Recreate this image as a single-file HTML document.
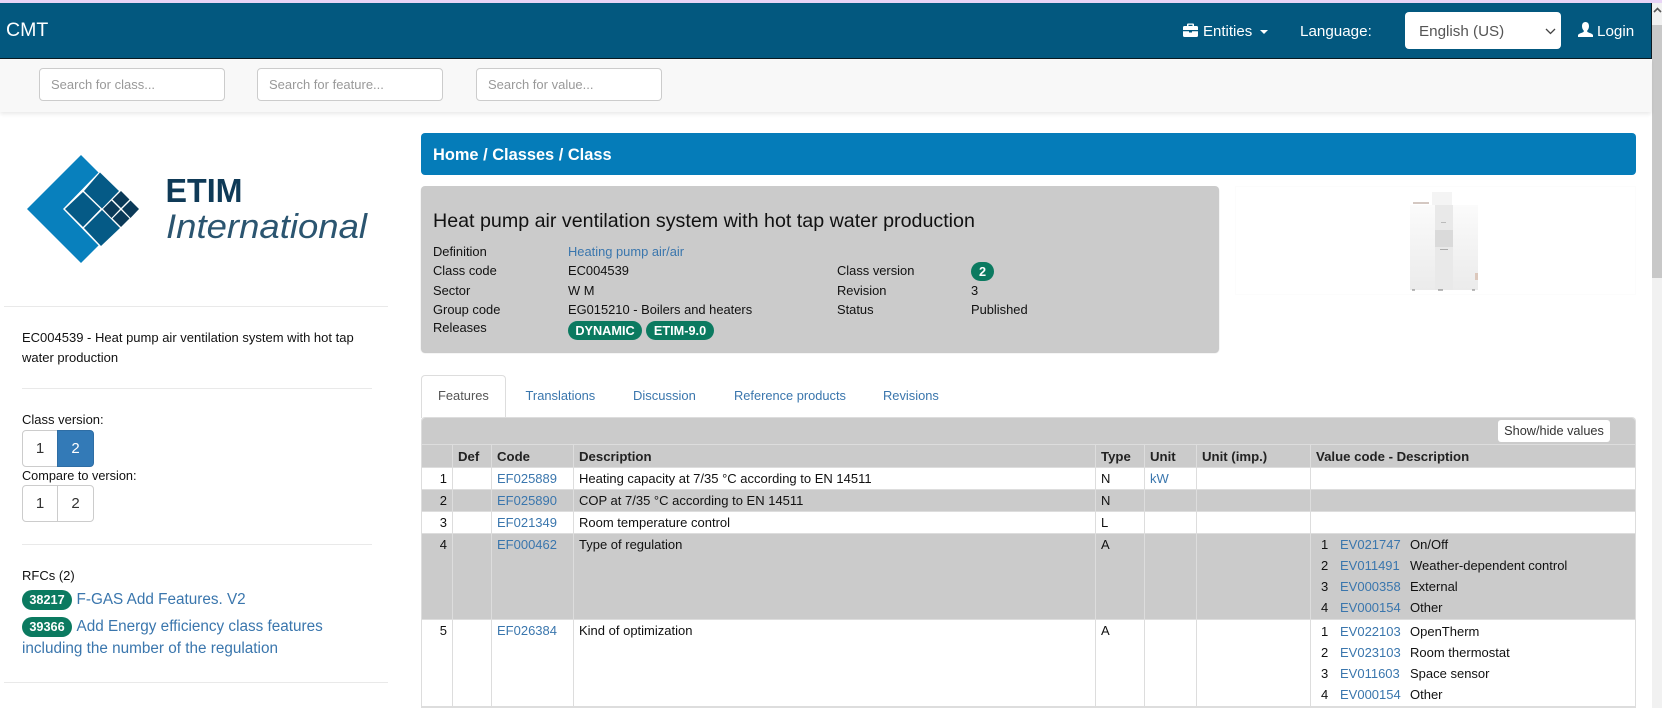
<!DOCTYPE html>
<html><head><meta charset="utf-8"><style>
html,body{margin:0;padding:0;width:1662px;height:708px;overflow:hidden;background:#fff;font-family:"Liberation Sans",Arial,sans-serif;color:#111}
.a{position:absolute;white-space:nowrap;line-height:20px}
a{color:#3a76ad;text-decoration:none}
.s{font-size:13px}
.t{font-size:12.900px}
.hr{position:absolute;height:1px;background:#e9e9e9}
.inp{position:absolute;top:68px;width:183.500px;height:31px;border:1px solid #ccc;border-radius:4px;background:#fff;color:#999;font-size:13px;line-height:31px;text-indent:11px}
.btn{position:absolute;width:36px;height:37px;box-sizing:border-box;border:1px solid #ccc;background:#fff;text-align:center;font-size:15px;line-height:35px;color:#333}
.bdg{position:absolute;background:#0b7a60;color:#fff;font-weight:bold;font-size:12.720px;text-align:center;border-radius:10px}
table{position:absolute;left:422px;top:445px;width:1213px;border-collapse:separate;border-spacing:0;table-layout:fixed;font-size:13px;line-height:20px}
td,th{box-sizing:border-box;border-right:1px solid #ddd;border-bottom:1px solid #ddd;padding:1px 0 0 5px;vertical-align:top;text-align:left;overflow:hidden;white-space:nowrap}
th{font-weight:bold;color:#222;font-size:13.200px;padding-top:2px}
td:last-child,th:last-child{border-right:0}
.g td,.g th{background:#cbcbcb}
.w td{background:#fff}
td.n,th.n{text-align:right;padding-right:5px;padding-left:0}
.v{position:relative;height:20.900px;line-height:20.900px}
.v b{font-weight:normal;position:absolute;left:5px}
.v a{position:absolute;left:24px}
.v i{font-style:normal;position:absolute;left:94px}
</style></head><body>
<div style="position:absolute;left:0;top:0;width:1662px;height:3px;background:#e8d4f6"></div>
<div style="position:absolute;left:0;top:3px;width:1651px;height:55px;background:#03587f;border-right:1px solid #0a1a22;border-bottom:1px solid #0a1a22"></div>
<div class="a" style="left:6px;top:20px;color:#fff;font-size:19.500px">CMT</div>
<svg style="position:absolute;left:1183px;top:23px" width="15" height="14" viewBox="0 0 15 14"><path fill="#fff" d="M5 0.5h5a1 1 0 0 1 1 1V3h2.500A1.500 1.500 0 0 1 15 4.500V7H0V4.500A1.500 1.500 0 0 1 1.500 3H4V1.500a1 1 0 0 1 1-1zM5.500 1.800V3h4V1.800zM0 8.300h6v1.200h3V8.300h6v4.200A1.500 1.500 0 0 1 13.500 14h-12A1.500 1.500 0 0 1 0 12.500z"/></svg>
<div class="a" style="left:1203px;top:22px;color:#fff;font-size:15px">Entities</div>
<div style="position:absolute;left:1260px;top:30px;width:0;height:0;border-left:4px solid transparent;border-right:4px solid transparent;border-top:4px solid #fff"></div>
<div class="a" style="left:1300px;top:22px;color:#fff;font-size:15.200px">Language:</div>
<div style="position:absolute;left:1405px;top:12px;width:156px;height:37px;background:#fff;border-radius:4px"></div>
<div class="a" style="left:1419px;top:22px;color:#555;font-size:15.200px">English (US)</div>
<svg style="position:absolute;left:1545px;top:28px" width="11" height="7" viewBox="0 0 11 7"><path d="M1 1l4.500 4.500L10 1" fill="none" stroke="#444" stroke-width="1.300"/></svg>
<svg style="position:absolute;left:1578px;top:22px" width="15" height="15" viewBox="0 0 15 15"><path fill="#fff" d="M7.500 0C10 0 11 2 11 4.200c0 1.800-.8 3.300-1.700 4.300-.3.800-.1 1.300.6 1.700 2 .8 4.300 1.300 5.100 2.800V15H0v-2c.8-1.500 3.100-2 5.100-2.800.7-.4.900-.9.600-1.700C4.800 7.500 4 6 4 4.200 4 2 5 0 7.500 0z"/></svg>
<div class="a" style="left:1597px;top:22px;color:#fff;font-size:15.200px">Login</div>

<div style="position:absolute;left:1652px;top:3px;width:10px;height:705px;background:#f1f1f1"></div>
<div style="position:absolute;left:1652px;top:25px;width:10px;height:253px;background:#c8c8c8"></div>
<svg style="position:absolute;left:1653px;top:7px" width="9" height="7" viewBox="0 0 9 7"><path d="M1 5l3.500-3.500L8 5" fill="none" stroke="#555" stroke-width="1.600"/></svg>

<div style="position:absolute;left:0;top:59px;width:1651px;height:53px;background:#f8f8f8;box-shadow:0 2px 4px rgba(0,0,0,.09)"></div>
<div class="inp" style="left:39px">Search for class...</div>
<div class="inp" style="left:257px">Search for feature...</div>
<div class="inp" style="left:476px">Search for value...</div>

<svg style="position:absolute;left:0;top:140px" width="400" height="135" viewBox="0 140 400 135">
<polygon fill="#0880bd" points="27,209 81,155 135,209 81,263"/>
<polygon fill="#fff" points="100,171 63,209 100,247 141,209"/>
<g fill="#055a86">
<polygon points="100,172.500 119,191 102,208.500 84,191"/>
<polygon points="83,192 100.500,209 83,227 65,209"/>
<polygon points="102,210 120,228 101,246 84,228"/>
</g>
<g fill="#0b3a58">
<polygon points="121,191 129.500,199.500 121,208 112.500,199.500"/>
<polygon points="111.500,200.500 120,209 111.500,218 103,209"/>
<polygon points="130.500,200.500 139,209 130.500,218 122,209"/>
<polygon points="121,210 129.500,218.500 121,227 112.500,218.500"/>
</g>
<text x="165.500" y="202" font-family="Liberation Sans" font-weight="bold" font-size="33" fill="#0f3a57" textLength="77" lengthAdjust="spacingAndGlyphs">ETIM</text>
<text x="166" y="238" font-family="Liberation Sans" font-style="italic" font-size="34" fill="#2b5570" textLength="201" lengthAdjust="spacingAndGlyphs">International</text>
</svg>

<div class="hr" style="left:4px;top:306px;width:384px"></div>
<div class="a s" style="left:22px;top:328px">EC004539 - Heat pump air ventilation system with hot tap</div>
<div class="a s" style="left:22px;top:348px">water production</div>
<div class="hr" style="left:22px;top:388px;width:350px"></div>
<div class="a s" style="left:22px;top:410px">Class version:</div>
<div class="btn" style="left:22px;top:430px;border-radius:4px 0 0 4px">1</div>
<div class="btn" style="left:57px;top:430px;width:37px;border-color:#2e6da4;background:#337ab7;color:#fff;border-radius:0 4px 4px 0">2</div>
<div class="a" style="left:22px;top:466px;font-size:12.720px">Compare to version:</div>
<div class="btn" style="left:22px;top:485px;border-radius:4px 0 0 4px">1</div>
<div class="btn" style="left:57px;top:485px;width:37px;border-radius:0 4px 4px 0">2</div>
<div class="hr" style="left:22px;top:544px;width:350px"></div>
<div class="a s" style="left:22px;top:566px">RFCs (2)</div>
<div class="bdg" style="left:22px;top:590px;width:50px;height:20px;line-height:20px">38217</div>
<a class="a" style="left:76.500px;top:590px;font-size:15.300px">F-GAS Add Features. V2</a>
<div class="bdg" style="left:22px;top:617px;width:50px;height:20px;line-height:20px">39366</div>
<a class="a" style="left:76.500px;top:617px;font-size:15.300px">Add Energy efficiency class features</a>
<a class="a" style="left:22px;top:639px;font-size:15.300px">including the number of the regulation</a>
<div class="hr" style="left:4px;top:682px;width:384px"></div>

<div style="position:absolute;left:421px;top:133px;width:1215px;height:42px;background:#057cb9;border-radius:4px"></div>
<div class="a" style="left:433px;top:144.500px;color:#fff;font-weight:bold;font-size:16.400px">Home / Classes / Class</div>

<div style="position:absolute;left:421px;top:186px;width:798px;height:166px;background:#cbcbcb;border-radius:4px;box-shadow:0 1px 1px rgba(0,0,0,.25)"></div>
<div class="a" style="left:433px;top:211px;font-size:19.660px">Heat pump air ventilation system with hot tap water production</div>
<div class="a t" style="left:433px;top:242px">Definition</div><a class="a t" style="left:568px;top:242px">Heating pump air/air</a>
<div class="a t" style="left:433px;top:261px">Class code</div><div class="a t" style="left:568px;top:261px">EC004539</div>
<div class="a t" style="left:837px;top:261px">Class version</div>
<div class="bdg" style="left:971px;top:262px;width:23px;height:19px;line-height:19px">2</div>
<div class="a t" style="left:433px;top:281px">Sector</div><div class="a t" style="left:568px;top:281px">W M</div>
<div class="a t" style="left:837px;top:281px">Revision</div><div class="a t" style="left:971px;top:281px">3</div>
<div class="a t" style="left:433px;top:300px">Group code</div><div class="a t" style="left:568px;top:300px">EG015210 - Boilers and heaters</div>
<div class="a t" style="left:837px;top:300px">Status</div><div class="a t" style="left:971px;top:300px">Published</div>
<div class="a t" style="left:433px;top:318px">Releases</div>
<div class="bdg" style="left:568px;top:321px;width:74px;height:19px;line-height:19px">DYNAMIC</div>
<div class="bdg" style="left:646px;top:321px;width:68px;height:19px;line-height:19px">ETIM-9.0</div>

<div style="position:absolute;left:1235px;top:186px;width:401px;height:109px;box-sizing:border-box;border:1px solid #fcfcfc"></div>
<svg style="position:absolute;left:1400px;top:185px" width="90" height="115" viewBox="0 0 90 115">
<defs><linearGradient id="g1" x1="0" y1="0" x2="0" y2="1"><stop offset="0" stop-color="#fbfbfb"/><stop offset="1" stop-color="#ebebeb"/></linearGradient></defs>
<rect x="10" y="20" width="68" height="85" fill="url(#g1)"/>
<rect x="32" y="7" width="20" height="13" fill="#f4f4f4"/>
<rect x="35" y="20" width="18" height="85" fill="#e9e9e9"/>
<rect x="35" y="45" width="18" height="17" fill="#dadada"/>
<rect x="40" y="64" width="8" height="1" fill="#aaa"/>
<rect x="41" y="37" width="5" height="1" fill="#bbb"/>
<rect x="13" y="17" width="16" height="2" fill="#d4c8c2"/>
<rect x="75" y="88" width="3" height="7" fill="#dcc8bc"/>
<rect x="12" y="104.500" width="3" height="1" fill="#777"/><rect x="38" y="104.500" width="5" height="1" fill="#777"/><rect x="72" y="104.500" width="3" height="1" fill="#777"/>
</svg>

<div style="position:absolute;left:421px;top:375px;width:85px;height:43px;box-sizing:border-box;border:1px solid #ddd;border-bottom:0;border-radius:4px 4px 0 0;background:#fff"></div>
<div class="a t" style="left:438px;top:386px;color:#555">Features</div>
<a class="a t" style="left:525.500px;top:386px">Translations</a>
<a class="a s" style="left:633px;top:386px">Discussion</a>
<a class="a" style="left:734px;top:386px;font-size:12.840px">Reference products</a>
<a class="a t" style="left:883px;top:386px">Revisions</a>

<div style="position:absolute;left:421px;top:417px;width:1215px;height:291px;background:#ddd;border-radius:4px 4px 0 0"></div>
<div style="position:absolute;left:422px;top:418px;width:1213px;height:27px;background:#cbcbcb;border-radius:4px 4px 0 0;border-bottom:1px solid #ddd;box-sizing:border-box"></div>
<div class="a" style="left:1498px;top:420px;width:112px;height:22px;line-height:22px;background:#fff;border-radius:3px;text-align:center;color:#333;font-size:12.720px">Show/hide values</div>

<table>
<colgroup><col style="width:31px"><col style="width:39px"><col style="width:82px"><col style="width:522px"><col style="width:49px"><col style="width:52px"><col style="width:114px"><col style="width:324px"></colgroup>
<tr class="g" style="height:23px"><th></th><th>Def</th><th>Code</th><th>Description</th><th>Type</th><th>Unit</th><th>Unit (imp.)</th><th>Value code - Description</th></tr>
<tr class="w" style="height:22px"><td class="n">1</td><td></td><td><a>EF025889</a></td><td>Heating capacity at 7/35 °C according to EN 14511</td><td>N</td><td><a>kW</a></td><td></td><td></td></tr>
<tr class="g" style="height:22px"><td class="n">2</td><td></td><td><a>EF025890</a></td><td>COP at 7/35 °C according to EN 14511</td><td>N</td><td></td><td></td><td></td></tr>
<tr class="w" style="height:22px"><td class="n">3</td><td></td><td><a>EF021349</a></td><td>Room temperature control</td><td>L</td><td></td><td></td><td></td></tr>
<tr class="g" style="height:86px"><td class="n">4</td><td></td><td><a>EF000462</a></td><td>Type of regulation</td><td>A</td><td></td><td></td><td>
<div class="v"><b>1</b><a>EV021747</a><i>On/Off</i></div>
<div class="v"><b>2</b><a>EV011491</a><i>Weather-dependent control</i></div>
<div class="v"><b>3</b><a>EV000358</a><i>External</i></div>
<div class="v"><b>4</b><a>EV000154</a><i>Other</i></div></td></tr>
<tr class="w" style="height:87px"><td class="n">5</td><td></td><td><a>EF026384</a></td><td>Kind of optimization</td><td>A</td><td></td><td></td><td style="padding-top:2px">
<div class="v"><b>1</b><a>EV022103</a><i>OpenTherm</i></div>
<div class="v"><b>2</b><a>EV023103</a><i>Room thermostat</i></div>
<div class="v"><b>3</b><a>EV011603</a><i>Space sensor</i></div>
<div class="v"><b>4</b><a>EV000154</a><i>Other</i></div></td></tr>
</table>
</body></html>
